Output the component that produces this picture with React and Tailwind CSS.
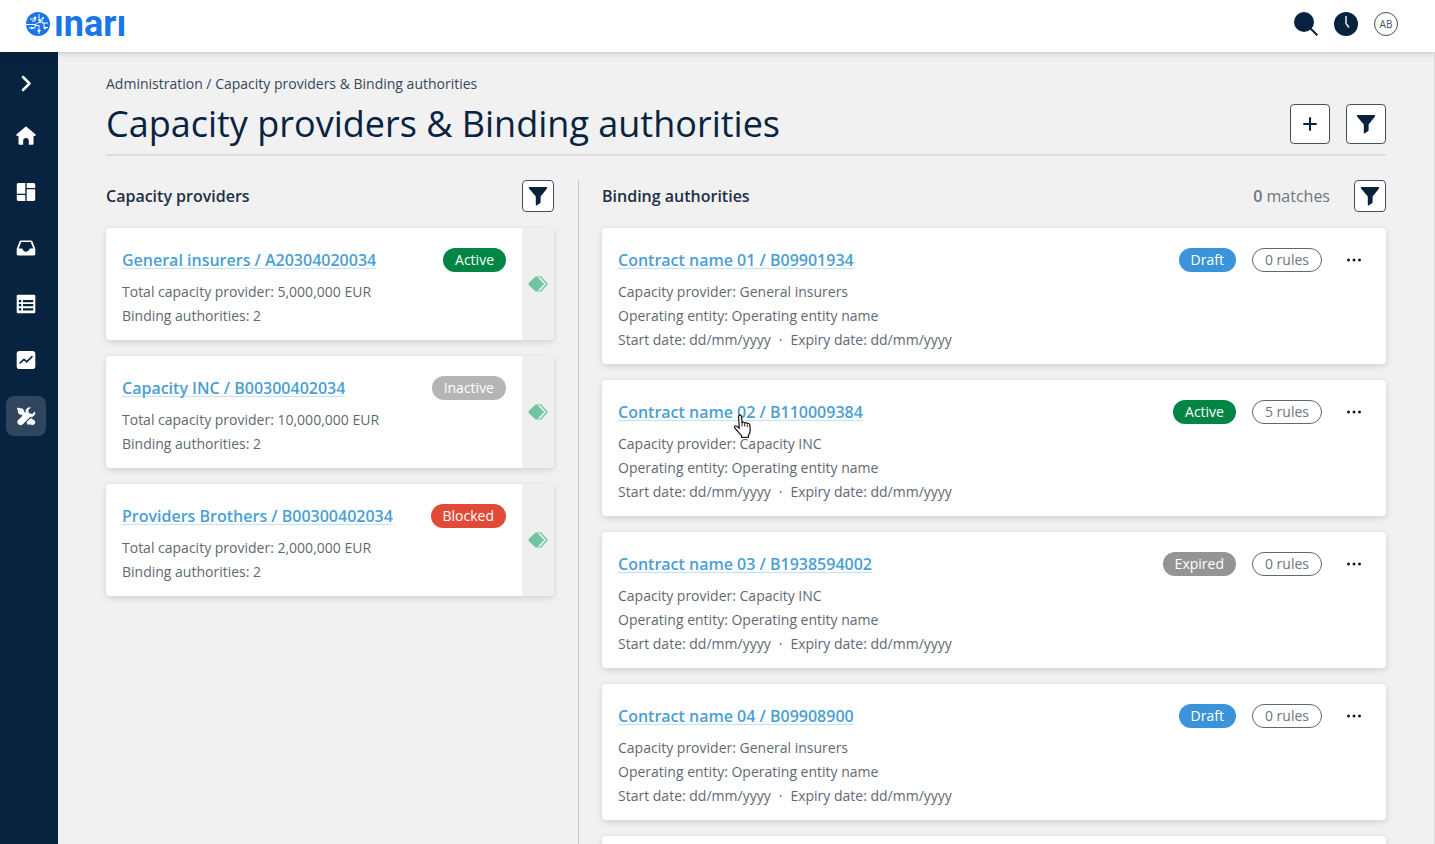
import clsx from "clsx";

const providers = [
  { id: 1, name: "General insurers / A20304020034", total: "5,000,000 EUR", count: 2, status: "Active" },
  { id: 2, name: "Capacity INC / B00300402034", total: "10,000,000 EUR", count: 2, status: "Inactive" },
  { id: 3, name: "Providers Brothers / B00300402034", total: "2,000,000 EUR", count: 2, status: "Blocked" },
];

const contracts = [
  { id: 1, name: "Contract name 01 / B09901934", provider: "General insurers", status: "Draft", rules: 0 },
  { id: 2, name: "Contract name 02 / B110009384", provider: "Capacity INC", status: "Active", rules: 5 },
  { id: 3, name: "Contract name 03 / B1938594002", provider: "Capacity INC", status: "Expired", rules: 0 },
  { id: 4, name: "Contract name 04 / B09908900", provider: "General insurers", status: "Draft", rules: 0 },
  { id: 5, name: "Contract name 05 / B09908901", provider: "General insurers", status: "Draft", rules: 0 },
];

const statusColors = {
  Active: "bg-[#008545]",
  Inactive: "bg-[#b5b5b5]",
  Blocked: "bg-[#e04a37]",
  Draft: "bg-[#3b93d9]",
  Expired: "bg-[#949494]",
};

const navItems = [
  {
    label: "Home",
    icon: (
      <path d="M9.2.9a1.2 1.2 0 0 1 1.6 0l8.6 7.4c.7.7.3 1.7-.6 1.700H17.500v7.400c0 .8-.6 1.400-1.400 1.400h-3.300v-4.300c0-1.500-1.100-2.600-2.800-2.600s-2.800 1.100-2.800 2.600v4.300H3.900c-.8 0-1.400-.6-1.400-1.400V10H1.200c-.9 0-1.300-1-.6-1.700z" />
    ),
  },
  {
    label: "Dashboard",
    icon: (
      <>
        <path d="M2.500 1H9.300v10.800H.8V2.700C.8 1.800 1.500 1 2.500 1z" />
        <path d="M.8 13h8.500v6H2.500c-1 0-1.700-.8-1.700-1.700z" />
        <path d="M10.700 1h6.800c1 0 1.700.8 1.700 1.700V6h-8.500z" />
        <path d="M10.700 7.300h8.500v10c0 .9-.7 1.700-1.700 1.700h-6.800z" />
      </>
    ),
  },
  {
    label: "Inbox",
    icon: (
      <path
        fillRule="evenodd"
        d="M5.300 2.500h9.400c.9 0 1.600.5 1.900 1.300l2.700 7.200v4.900c0 .9-.7 1.600-1.600 1.600H2.300c-.9 0-1.600-.7-1.600-1.600V11l2.700-7.200c.3-.8 1-1.300 1.900-1.300zM5.300 4 2.700 10.500h3.500c.6 2 2 3.200 3.800 3.200s3.200-1.200 3.800-3.200h3.500L14.700 4z"
      />
    ),
  },
  {
    label: "Records",
    icon: (
      <path
        fillRule="evenodd"
        d="M2 .7h16c.8 0 1.300.5 1.300 1.300v16c0 .8-.5 1.300-1.300 1.300H2c-.8 0-1.300-.5-1.300-1.300V2C.7 1.200 1.200.7 2 .7zM2.800 6v2.300h2.500V6zm4.200 0v2.300h10.200V6zM2.800 10v2.300h2.500V10zM7 10v2.300h10.200V10zM2.800 14.200v2.300h2.500v-2.300zm4.200 0v2.300h10.200v-2.300z"
      />
    ),
  },
  {
    label: "Reports",
    icon: (
      <>
        <rect x="0.700" y="1" width="18.600" height="18" rx="2.800" />
        <path
          d="m4 13 4-3.700 2.700 2.500L16 6.700"
          fill="none"
          stroke="#08233f"
          strokeWidth="1.600"
          strokeLinejoin="round"
          strokeLinecap="round"
        />
      </>
    ),
  },
  {
    label: "Administration",
    active: true,
    icon: (
      <>
        <path d="M.9 2.500 2 1.400l2.300 1 1.700-.2 2.300 2.300-.2 1.300 2.100 2-2.900 2.800-2-2-1.300.2L1.900 6.700l.2-1.900z" />
        <path d="M19 5.300 16.300 8l-3.400-.8-.6-3.200 2.500-2.600C11.600.8 9 3.300 9.600 6.700l-7.200 7a3.100 3.100 0 0 0 4.400 4.500l7.300-7.100c3.400.6 5.900-2.400 4.900-5.800z" />
        <path d="m13.500 13.200 1.500-1.100 3.500 2.300a2.800 2.800 0 0 1-3.600 4.200l-3.500-.2-.7-2.300z" />
      </>
    ),
  },
];

function FunnelIcon() {
  return (
    <svg viewBox="0 0 20 20" className="h-5 w-5 fill-[#08233f]" aria-hidden="true">
      <path d="M1.800 1h16.400c1 0 1.300.8.8 1.500l-6.400 7.900v6.400L9 19.200c-.7.500-1.200.2-1.200-.5v-8.300L1 2.500C.5 1.800.8 1 1.800 1z" />
    </svg>
  );
}

function SquareButton({ label, large, children }) {
  return (
    <button
      type="button"
      aria-label={label}
      className={clsx(
        "flex shrink-0 items-center justify-center rounded-sm border border-[#42505e] bg-white",
        large ? "h-10 w-10" : "h-8 w-8"
      )}
    >
      {children}
    </button>
  );
}

function Logo() {
  return (
    <a href="#" className="flex items-center gap-1 text-[#1876e8]">
      <svg viewBox="0 0 24 24" className="h-6 w-6" aria-hidden="true">
        <circle cx="12" cy="12" r="12" fill="currentColor" />
        <g fill="none" stroke="#fff" strokeWidth="1">
          <path d="M0 12.500h10l2-2h3M4 7h3.500M9 5v4H6M13 2v7M16 6v5h6M3 16h6M9 16v-2.500h4v3M13 19v3M18 11v4.500h4" />
        </g>
        <g fill="#fff">
          <circle cx="9" cy="6" r="1.500" />
          <circle cx="14" cy="8.500" r="1.300" />
          <circle cx="6" cy="16" r="1.300" />
          <circle cx="13" cy="18.500" r="1.500" />
          <circle cx="19" cy="16" r="1.300" />
          <circle cx="17" cy="6" r="1" />
        </g>
      </svg>
      <span className="font-[Roboto] text-4xl leading-8 font-bold">ınarı</span>
    </a>
  );
}

function Header() {
  return (
    <header className="relative z-10 flex h-13 items-center justify-between bg-white pr-9 pb-1 pl-6.5 shadow-md shadow-black/10">
      <Logo />
      <div className="flex items-center gap-4">
        <button type="button" aria-label="Search">
          <svg viewBox="0 0 24 24" className="h-6 w-6" aria-hidden="true">
            <circle cx="10" cy="10" r="10" fill="#08233f" />
            <path d="m16 16 7.300 7.300" stroke="#08233f" strokeWidth="2" />
          </svg>
        </button>
        <button type="button" aria-label="Recent">
          <svg viewBox="0 0 24 24" className="h-6 w-6" aria-hidden="true">
            <circle cx="12" cy="12" r="12" fill="#08233f" />
            <path d="M12 4v7.500l3 4" fill="none" stroke="#e8edf2" strokeWidth="1.500" />
          </svg>
        </button>
        <button
          type="button"
          className="mr-px flex h-6 w-6 items-center justify-center rounded-full border border-[#42505e] text-[10px] text-[#42505e]"
        >
          AB
        </button>
      </div>
    </header>
  );
}

function Sidebar() {
  return (
    <nav className="flex w-14.5 shrink-0 flex-col bg-[#08233f] px-1.5 pt-3">
      <button type="button" aria-label="Expand menu" className="mb-3 flex h-10 w-10 items-center justify-center">
        <svg viewBox="0 0 20 20" className="h-5 w-5" aria-hidden="true">
          <path
            d="m7 3 6.500 6.500L7 16"
            fill="none"
            stroke="#fff"
            strokeWidth="2.500"
            strokeLinecap="round"
            strokeLinejoin="round"
          />
        </svg>
      </button>
      <div className="flex flex-col gap-4">
        {navItems.map((item) => (
          <a
            key={item.label}
            href="#"
            aria-label={item.label}
            className={clsx(
              "flex h-10 w-10 items-center justify-center rounded-lg",
              item.active && "bg-[#30465f]"
            )}
          >
            <svg viewBox="0 0 20 20" className="h-5 w-5 fill-white" aria-hidden="true">
              {item.icon}
            </svg>
          </a>
        ))}
      </div>
    </nav>
  );
}

function StatusPill({ status }) {
  return (
    <span className={clsx("flex h-6 shrink-0 items-center rounded-full px-3 text-sm text-white", statusColors[status])}>
      {status}
    </span>
  );
}

function CardLink({ children }) {
  return (
    <a
      href="#"
      className="truncate text-base leading-6 font-semibold text-[#4a9fd4] underline decoration-[#c3e2f2] decoration-1 underline-offset-2"
    >
      {children}
    </a>
  );
}

function ProviderCard({ provider }) {
  return (
    <article className="flex overflow-hidden rounded-sm bg-white shadow-[0_2px_6px_rgba(0,0,0,0.14)]">
      <div className="min-w-0 flex-1 px-4 pt-5 pb-3">
        <div className="mb-2 flex items-center justify-between">
          <CardLink>{provider.name}</CardLink>
          <StatusPill status={provider.status} />
        </div>
        <p>Total capacity provider: {provider.total}</p>
        <p>Binding authorities: {provider.count}</p>
      </div>
      <button
        type="button"
        aria-label={`Show binding authorities of ${provider.name}`}
        className="flex w-8 items-center justify-center bg-[#efefef]"
      >
        <svg viewBox="0 0 20 16" className="h-4 w-5" aria-hidden="true">
          <path d="M.8 7 6.500 1.300q.7-.8 2-.8h1.500l6 6.500q.9 1 0 2l-6 6.500H8.500q-1.300 0-2-.8L.8 9q-.9-1 0-2z" fill="#72c5a2" />
          <path d="m11.800 1 6.700 7-6.700 7" fill="none" stroke="#efefef" strokeWidth="3.500" />
          <path d="m11.500.8 1 0 6.500 7.200-6.500 7.200h-1" fill="none" stroke="#72c5a2" strokeWidth="1.400" />
        </svg>
      </button>
    </article>
  );
}

function ContractCard({ contract }) {
  return (
    <article className="rounded-sm bg-white px-4 pt-5 pb-3 shadow-[0_2px_6px_rgba(0,0,0,0.14)]">
      <div className="mb-2 flex items-center justify-between">
        <CardLink>{contract.name}</CardLink>
        <div className="flex h-6 shrink-0 items-center gap-4">
          <StatusPill status={contract.status} />
          <span className="flex h-6 items-center rounded-full border border-[#5d6872] px-3 text-sm text-[#6b7680]">
            {contract.rules} rules
          </span>
          <button type="button" aria-label="More actions" className="flex h-6 w-8 items-center justify-center">
            <svg viewBox="0 0 16 4" className="h-1 w-4 fill-[#111c28]" aria-hidden="true">
              <circle cx="2.500" cy="2" r="1.500" />
              <circle cx="8" cy="2" r="1.500" />
              <circle cx="13.500" cy="2" r="1.500" />
            </svg>
          </button>
        </div>
      </div>
      <p>Capacity provider: {contract.provider}</p>
      <p>Operating entity: Operating entity name</p>
      <p className="flex gap-2">
        <span>Start date: dd/mm/yyyy</span>
        <span>·</span>
        <span>Expiry date: dd/mm/yyyy</span>
      </p>
    </article>
  );
}

function HandCursor() {
  return (
    <svg viewBox="0 0 20 24" className="pointer-events-none fixed top-[414px] left-[733px] z-20 h-6 w-5" aria-hidden="true">
      <path
        d="M5.500 2.500C5.500.5 8.300.5 8.500 2.500l.5 6.300c.3-1 2.300-.9 2.600.3.600-.8 2.300-.6 2.600.6.900-.8 2.500-.2 2.600 1.200l.4 5.100c.1 2.500-.7 3.800-1.800 5.300v2H8.500v-1.800C6.300 19.500 4.800 17 2 14.200.700 12.700 2 11.200 3.800 12.300l2.500 2z"
        fill="#fff"
        stroke="#222"
        strokeWidth="1.300"
        strokeLinejoin="round"
      />
      <path d="M9 9v3.500M11.700 9.500v3M14.300 10.500v2.500" stroke="#222" strokeWidth="1" />
    </svg>
  );
}

export default function App() {
  return (
    <div className="flex h-screen flex-col bg-[#f1f1f1] font-['Open_Sans',sans-serif] text-sm leading-6 text-[#5f6973]">
      <Header />
      <div className="flex min-h-0 flex-1">
        <Sidebar />
        <main className="min-w-0 flex-1 overflow-y-auto border-r border-[#dcdcdc] px-12 pt-5 [scrollbar-width:none]">
          <nav aria-label="Breadcrumb" className="mb-2 text-[#36475a]">
            <a href="#">Administration</a> / <span>Capacity providers &amp; Binding authorities</span>
          </nav>
          <div className="flex items-center justify-between border-b-2 border-[#dedede] pb-2.5">
            <h1 className="text-4xl leading-10 text-[#08233f]">Capacity providers &amp; Binding authorities</h1>
            <div className="flex gap-4">
              <SquareButton label="Add" large>
                <svg viewBox="0 0 16 16" className="h-4 w-4" aria-hidden="true">
                  <path d="M8 2v12M2 8h12" stroke="#08233f" strokeWidth="2" strokeLinecap="round" />
                </svg>
              </SquareButton>
              <SquareButton label="Filter" large>
                <FunnelIcon />
              </SquareButton>
            </div>
          </div>

          <div className="mt-6 grid grid-cols-[59fr_101fr]">
            <section className="pr-6">
              <div className="mb-4 flex items-center justify-between">
                <h2 className="text-base font-semibold text-[#1d3045]">Capacity providers</h2>
                <SquareButton label="Filter capacity providers">
                  <FunnelIcon />
                </SquareButton>
              </div>
              <div className="flex flex-col gap-4">
                {providers.map((provider) => (
                  <ProviderCard key={provider.id} provider={provider} />
                ))}
              </div>
            </section>

            <section className="border-l border-[#c4c8cb] pb-6 pl-[23px]">
              <div className="mb-4 flex items-center justify-between">
                <h2 className="text-base font-semibold text-[#1d3045]">Binding authorities</h2>
                <div className="flex items-center gap-6">
                  <span className="text-base text-[#6b7680]">
                    <span className="font-semibold">0</span> matches
                  </span>
                  <SquareButton label="Filter binding authorities">
                    <FunnelIcon />
                  </SquareButton>
                </div>
              </div>
              <div className="flex flex-col gap-4">
                {contracts.map((contract) => (
                  <ContractCard key={contract.id} contract={contract} />
                ))}
              </div>
            </section>
          </div>
        </main>
      </div>
      <HandCursor />
    </div>
  );
}
